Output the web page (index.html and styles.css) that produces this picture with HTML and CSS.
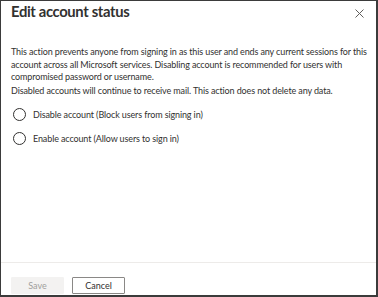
FILE: index.html
```html
<!DOCTYPE html>
<html lang="en">
<head>
  <meta charset="UTF-8" />
  <title>Edit account status</title>
  <link rel="stylesheet" href="styles.css">
</head>
<body>
  <div class="dialog">
    <div class="header">
      <h1>Edit account status</h1>
      <button class="close" aria-label="Close">
        <svg width="9" height="9" viewBox="0 0 9 9"><path d="M0.5 0.5 L8.5 8.5 M8.5 0.5 L0.5 8.5" stroke="#605e5c" stroke-width="1" fill="none"/></svg>
      </button>
    </div>

    <div class="content">
      <p>This action prevents anyone from signing in as this user and ends any current sessions for this account across all Microsoft services. Disabling account is recommended for users with compromised password or username.</p>
      <p>Disabled accounts will continue to receive mail. This action does not delete any data.</p>

      <div class="options">
        <label class="option"><span class="radio"></span>Disable account (Block users from signing in)</label>
        <label class="option"><span class="radio"></span>Enable account (Allow users to sign in)</label>
      </div>
    </div>

    <div class="footer">
      <button class="btn btn-disabled">Save</button>
      <button class="btn">Cancel</button>
    </div>
  </div>
</body>
</html>
```

FILE: styles.css
```css
* {
  box-sizing: border-box;
  margin: 0;
  padding: 0;
}

body {
  font-family: 'Lato', 'Open Sans', sans-serif;
  color: #323130;
  background: #fff;
}

.dialog {
  width: 378px;
  height: 297px;
  border: 1px solid #3b3b3b;
  border-right-width: 2px;
  border-bottom-width: 2px;
  display: flex;
  flex-direction: column;
}

.header {
  display: flex;
  justify-content: space-between;
  align-items: flex-start;
  padding: 0 12px 0 10px;
}

.header h1 {
  font-size: 14.8px;
  font-weight: 700;
  letter-spacing: -0.35px;
  line-height: 21px;
  color: #323130;
}

.close {
  background: none;
  border: none;
  margin-top: 8px;
  display: flex;
}

.content {
  flex: 1;
  padding: 24px 4px 0 10px;
  font-size: 9px;
  letter-spacing: -0.12px;
  line-height: 12.5px;
}

.content p + p {
  margin-top: 1px;
}

.options {
  margin-top: 11px;
  display: flex;
  flex-direction: column;
  gap: 11px;
}

.option {
  display: flex;
  align-items: center;
  gap: 7px;
  padding-left: 2px;
  line-height: 12px;
}

.radio {
  width: 13px;
  height: 13px;
  border: 1px solid #323130;
  border-radius: 50%;
}

.footer {
  border-top: 1px solid #edebe9;
  padding: 14px 10px 0 10px;
  height: 33px;
  display: flex;
  gap: 8px;
  align-items: flex-start;
}

.btn {
  width: 53px;
  height: 17px;
  border: 1px solid #8a8886;
  border-radius: 1px;
  background: #fff;
  font-family: 'Lato', 'Open Sans', sans-serif;
  font-size: 9px;
  color: #323130;
}

.btn-disabled {
  background: #f3f2f1;
  border-color: #f3f2f1;
  color: #a19f9d;
}
```
